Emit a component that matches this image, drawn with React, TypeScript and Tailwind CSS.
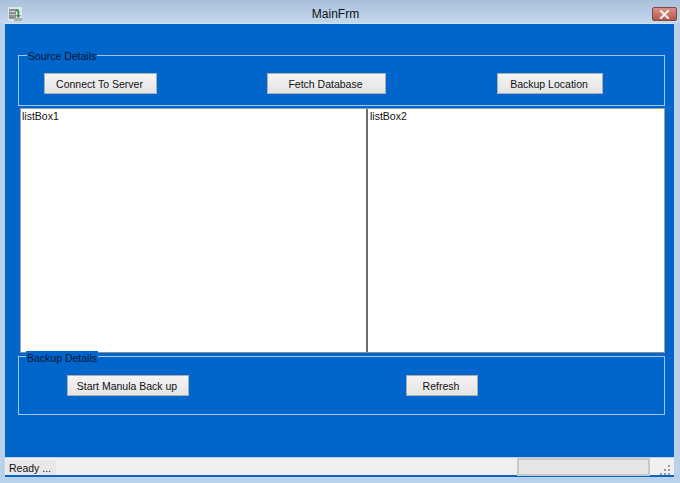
function Button({ label, className }: { label: string; className: string }) {
  return (
    <button className={`h-[21px] border border-[#adadad] bg-gradient-to-b from-[#f4f4f4] to-[#e4e4e4] pr-[2px] pt-px text-[10.5px] leading-none text-[#111] ${className}`}>
      {label}
    </button>
  )
}

function GroupBox({ title, left, className, children }: { title: string; left: string; className: string; children: React.ReactNode }) {
  return (
    <div className={`relative mx-[13px] w-[647px] border border-[#a5c4ea] ${className}`}>
      <span className={`absolute bg-[#0066cc] px-px text-[10.5px] leading-[14px] text-[#03142e] ${left}`}>{title}</span>
      {children}
    </div>
  )
}

export default function App() {
  return (
    <div className="flex h-[483px] w-[680px] flex-col overflow-hidden bg-[#b9d1ea] font-['Liberation_Sans',sans-serif]">
      {/* title bar */}
      <div className="flex h-[23px] items-start bg-gradient-to-b from-[#a9c0da] to-[#c4d8ee] pl-[7px] pr-[3px]">
        <svg width="16" height="16" viewBox="0 0 16 16" className="mt-[6px] shrink-0">
          <rect x="1" y="1" width="14" height="14" fill="#dfe6ea" />
          <rect x="2" y="3" width="7" height="10" fill="#8b9296" />
          <rect x="3" y="5" width="5" height="1" fill="#d4d8da" />
          <rect x="3" y="8" width="5" height="1" fill="#c4c8ca" />
          <path d="M9 3c3 0 4 2 3 6l2 0-3 3-2-3 1.500 0c.5-2 0-4-1.500-4z" fill="#3c8a4a" />
          <rect x="7" y="12" width="8" height="3" fill="#a9adb0" />
        </svg>
        <span className="mt-[7px] flex-1 pr-[4px] text-center text-[12px] leading-[14px] text-[#111]">MainFrm</span>
        <div className="mt-[7px] flex h-[14px] w-[25px] items-center justify-center rounded-[2px] border border-[#7d4a4a] bg-gradient-to-b from-[#d98f86] to-[#b8544a]">
          <svg width="13" height="9" viewBox="0 0 13 9">
            <path d="M3 1l7 7M10 1L3 8" stroke="#f0e6e2" strokeWidth="2.400" strokeLinecap="square" fill="none" />
          </svg>
        </div>
      </div>

      {/* client area */}
      <div className="ml-[5px] flex h-[454px] w-[669px] flex-col border-t border-[#d4e2f2] bg-[#0066cc]">
        <GroupBox title="Source Details" left="left-[8px] top-[-7px]" className="mt-[31px] h-[51px]">
          <div className="flex pt-[17px]">
            <Button label="Connect To Server" className="ml-[25px] w-[113px]" />
            <Button label="Fetch Database" className="ml-[110px] w-[119px]" />
            <Button label="Backup Location" className="ml-[111px] w-[106px]" />
          </div>
        </GroupBox>

        <div className="ml-[15px] mt-[2px] flex h-[245px] w-[645px] border border-[#a0a0a0] border-b-[#8c8c8c] bg-white text-[10.5px] leading-[14px] text-[#111]">
          <div className="w-[347px] border-r-2 border-[#6d6d7a] pl-[1px]">listBox1</div>
          <div className="flex-1 pl-[2px]">listBox2</div>
        </div>

        <GroupBox title="Backup Details" left="left-[7px] top-[-6px]" className="mt-[3px] h-[59px]">
          <div className="flex pt-[18px]">
            <Button label="Start Manula Back up" className="ml-[48px] w-[122px]" />
            <Button label="Refresh" className="ml-[217px] w-[72px]" />
          </div>
        </GroupBox>

        {/* status bar */}
        <div className="mt-[42px] flex h-[20px] items-stretch border-t border-[#b9cfe8] border-b-2 border-b-[#0066cc] bg-[#f0f0f0]">
          <div className="ml-[1px] mt-[2px] w-[50px] whitespace-nowrap bg-[#e8e8e8] pl-[3px] pt-px text-[10.5px] leading-[14px] text-[#111]">Ready ...</div>
          <div className="ml-[461px] h-[18px] w-[133px] border-2 border-[#c8c8c8] bg-[#e6e6e6]" />
          <svg width="12" height="12" viewBox="0 0 12 12" className="ml-[9px] mt-[6px]">
            <g fill="#9a9a9a">
              <rect x="9" y="1" width="2" height="2" />
              <rect x="5" y="5" width="2" height="2" />
              <rect x="9" y="5" width="2" height="2" />
              <rect x="1" y="9" width="2" height="2" />
              <rect x="5" y="9" width="2" height="2" />
              <rect x="9" y="9" width="2" height="2" />
            </g>
          </svg>
        </div>
      </div>
    </div>
  )
}
